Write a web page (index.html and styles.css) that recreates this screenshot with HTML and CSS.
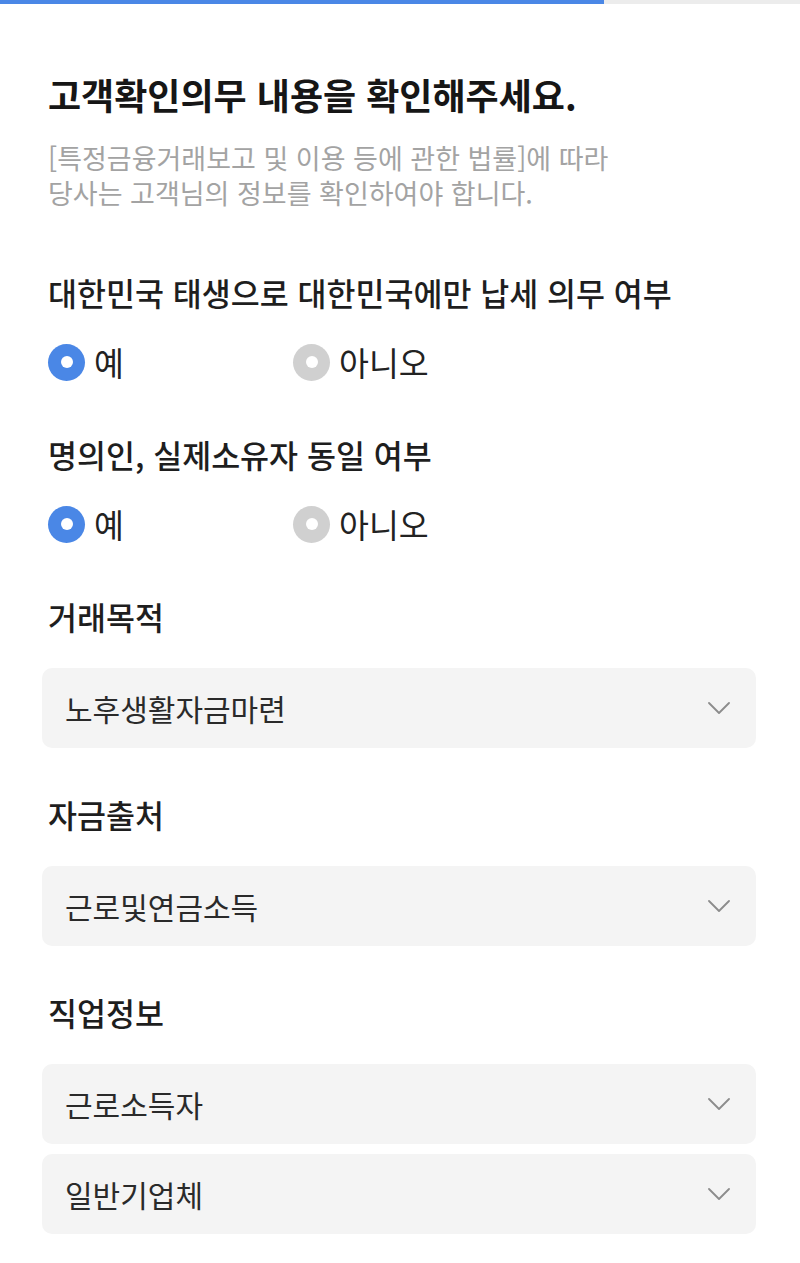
FILE: index.html
```html
<!DOCTYPE html>
<html lang="ko">
<head>
<meta charset="utf-8">
<title>고객확인의무</title>
<link rel="stylesheet" href="styles.css">
</head>
<body>
<div class="progress"><div class="progress-fill" style="width:75.5%"></div></div>
<main class="page">
  <h1 class="title">고객확인의무 내용을 확인해주세요.</h1>
  <p class="desc"><span class="desc-line">[특정금융거래보고 및 이용 등에 관한 법률]에 따라</span><span class="desc-line">당사는 고객님의 정보를 확인하여야 합니다.</span></p>

  <section class="field field--radio first">
    <h2 class="label">대한민국 태생으로 대한민국에만 납세 의무 여부</h2>
    <div class="radios">
      <div class="option"><span class="radio on"></span><span class="opt-text">예</span></div>
      <div class="option"><span class="radio"></span><span class="opt-text">아니오</span></div>
    </div>
  </section>

  <section class="field field--radio">
    <h2 class="label">명의인, 실제소유자 동일 여부</h2>
    <div class="radios">
      <div class="option"><span class="radio on"></span><span class="opt-text">예</span></div>
      <div class="option"><span class="radio"></span><span class="opt-text">아니오</span></div>
    </div>
  </section>

  <section class="field field--select">
    <h2 class="label">거래목적</h2>
    <div class="select"><span class="select-text">노후생활자금마련</span><svg class="chev" viewBox="0 0 22 12"><polyline points="1,1 11,11 21,1"/></svg></div>
  </section>

  <section class="field field--select">
    <h2 class="label">자금출처</h2>
    <div class="select"><span class="select-text">근로및연금소득</span><svg class="chev" viewBox="0 0 22 12"><polyline points="1,1 11,11 21,1"/></svg></div>
  </section>

  <section class="field field--select">
    <h2 class="label">직업정보</h2>
    <div class="select"><span class="select-text">근로소득자</span><svg class="chev" viewBox="0 0 22 12"><polyline points="1,1 11,11 21,1"/></svg></div>
    <div class="select select--stack"><span class="select-text">일반기업체</span><svg class="chev" viewBox="0 0 22 12"><polyline points="1,1 11,11 21,1"/></svg></div>
  </section>
</main>
</body>
</html>
```
FILE: styles.css
```css
* { box-sizing: border-box; }
html, body { margin: 0; padding: 0; background: #fff; }
body {
  font-family: "Noto Sans CJK KR", "Noto Sans", sans-serif;
  color: #1a1a1a;
}
.progress {
  height: 4px;
  background: #ececec;
}
.progress-fill {
  height: 100%;
  background: #4a87e6;
}
.page {
  padding: 0 44px 0 42px;
}
.title {
  margin: 68px 0 0;
  padding-left: 6px;
  font-size: 36px;
  line-height: 44px;
  font-weight: 700;
  color: #161616;
}
.desc {
  margin: 24px 0 0;
  padding-left: 6px;
  font-size: 27px;
  color: #a3a3a3;
}
.desc-line {
  display: block;
  height: 35px;
  line-height: 35px;
}
.field.first { margin-top: 62px; }
.field--radio + .field { margin-top: 52px; }
.field--select + .field { margin-top: 46px; }
.label {
  margin: 0 0 30px;
  padding-left: 6px;
  font-size: 31.5px;
  line-height: 40px;
  font-weight: 500;
  color: #1e1e1e;
}
.field--select .label { margin-bottom: 32px; }
.radios {
  display: grid;
  grid-template-columns: 245px auto;
  padding-left: 6px;
  height: 40px;
  align-items: center;
}
.option {
  display: flex;
  align-items: center;
  gap: 9px;
}
.radio {
  width: 37px;
  height: 37px;
  border-radius: 50%;
  background: #d0d0d0;
  display: flex;
  align-items: center;
  justify-content: center;
}
.radio::after {
  content: "";
  width: 12px;
  height: 12px;
  border-radius: 50%;
  background: #fff;
}
.radio.on { background: #4a87e6; }
.opt-text {
  font-size: 32.5px;
  line-height: 40px;
  color: #222;
}
.select {
  height: 80px;
  background: #f4f4f4;
  border-radius: 10px;
  display: flex;
  align-items: center;
  justify-content: space-between;
  padding: 0 26px 0 23px;
}
.select--stack { margin-top: 10px; }
.select-text {
  font-size: 30px;
  line-height: 40px;
  color: #2a2a2a;
}
.chev {
  width: 22px;
  height: 12px;
  fill: none;
  stroke: #8c8c8c;
  stroke-width: 1.8;
  stroke-linecap: round;
  stroke-linejoin: round;
}
```
